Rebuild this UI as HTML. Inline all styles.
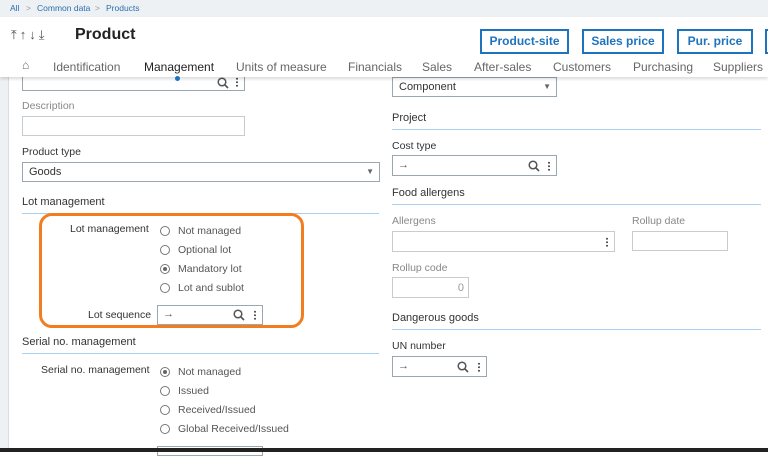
<!DOCTYPE html>
<html><head><style>
*{box-sizing:border-box;margin:0;padding:0}
body{width:768px;height:452px;overflow:hidden;background:#fff;font-family:"Liberation Sans",sans-serif;color:#333;position:relative;font-size:11px}
.a{position:absolute;white-space:nowrap}
.bc{left:0;top:0;width:768px;height:17px;background:#eef1f3;font-size:8.5px;color:#2a6fb0}
.hdr{left:0;top:17px;width:768px;height:60px;background:#fff;box-shadow:0 2px 3px rgba(0,0,0,.15);z-index:2}
.btn{top:29px;height:25px;border:2px solid #1e73be;color:#1e73be;font-weight:bold;font-size:12px;text-align:center;line-height:21px;background:#fff;z-index:3}
.tab{top:60px;font-size:12px;color:#666;z-index:3}
.box{border:1px solid #9aa6b0;background:#fff}
.lbl{font-size:10.5px;color:#333}
.gl{color:#888}
.sec{font-size:11px;color:#333}
.ln{height:1px;background:#a9d0f0}
.r{width:10px;height:10px;border:1px solid #777;border-radius:50%}
.r.on::after{content:"";position:absolute;left:2px;top:2px;width:4px;height:4px;border-radius:50%;background:#666}
.ic{font-size:11px;color:#555}
.mg{position:absolute;width:12px;height:12px}
.dt{position:absolute;width:2px;height:10px;background:radial-gradient(circle,#555 0.9px,transparent 1.1px) 0 0/2px 3.5px}
</style></head><body>
<svg width="0" height="0" style="position:absolute"><defs><symbol id="m" viewBox="0 0 12 12"><circle cx="5" cy="5" r="3.8" fill="none" stroke="#555" stroke-width="1.5"/><line x1="7.8" y1="7.8" x2="11" y2="11" stroke="#555" stroke-width="1.7"/></symbol></defs></svg>
<div class="a" style="left:0;top:17px;width:9px;height:435px;background:#eef1f3;border-right:1px solid #d8dde2"></div>
<div class="a bc"><span class="a" style="left:10px;top:3px">All</span><span class="a" style="left:26px;top:3px;color:#999">&gt;</span><span class="a" style="left:37px;top:3px">Common data</span><span class="a" style="left:95px;top:3px;color:#999">&gt;</span><span class="a" style="left:106px;top:3px">Products</span></div>
<div class="a hdr"></div>
<div class="a" style="left:11px;top:27px;font-size:13px;color:#555;z-index:3;letter-spacing:3px">⤒↑↓⤓</div>
<div class="a" style="left:75px;top:26px;font-size:16px;font-weight:bold;color:#222;z-index:3">Product</div>
<div class="a btn" style="left:480px;width:89px">Product-site</div>
<div class="a btn" style="left:582px;width:82px">Sales price</div>
<div class="a btn" style="left:677px;width:76px">Pur. price</div>
<div class="a btn" style="left:765px;width:10px"></div>
<div class="a tab" style="left:22px;top:58px;font-size:12px">⌂</div>
<div class="a tab" style="left:53px">Identification</div>
<div class="a tab" style="left:144px;color:#222">Management</div>
<div class="a" style="left:175px;top:76px;width:5px;height:5px;border-radius:50%;background:#1e73be;z-index:4"></div>
<div class="a tab" style="left:236px">Units of measure</div>
<div class="a tab" style="left:348px">Financials</div>
<div class="a tab" style="left:422px">Sales</div>
<div class="a tab" style="left:474px">After-sales</div>
<div class="a tab" style="left:553px">Customers</div>
<div class="a tab" style="left:633px">Purchasing</div>
<div class="a tab" style="left:713px">Suppliers</div>

<div class="a box" style="left:22px;top:72px;width:223px;height:19px"><svg class="mg" style="left:194px;top:4px"><use href="#m"/></svg><span class="dt" style="left:213px;top:4px"></span></div>
<div class="a lbl gl" style="left:22px;top:100px">Description</div>
<div class="a box" style="left:22px;top:116px;width:223px;height:20px;border-color:#c5ccd2"></div>
<div class="a lbl" style="left:22px;top:146px">Product type</div>
<div class="a box" style="left:22px;top:162px;width:358px;height:20px"><span class="a" style="left:6px;top:3px;font-size:11px">Goods</span><span class="a" style="right:5px;top:4px;font-size:8px;color:#666">▼</span></div>
<div class="a sec" style="left:22px;top:196px">Lot management</div>
<div class="a ln" style="left:22px;top:213px;width:357px"></div>
<div class="a" style="left:39px;top:213px;width:265px;height:115px;border:3px solid #f47c20;border-radius:13px"></div>
<div class="a lbl" style="left:70px;top:223px">Lot management</div>
<div class="a r" style="left:160px;top:226px"></div><div class="a lbl" style="left:178px;top:225px;color:#555">Not managed</div>
<div class="a r" style="left:160px;top:245px"></div><div class="a lbl" style="left:178px;top:244px;color:#555">Optional lot</div>
<div class="a r on" style="left:160px;top:264px"></div><div class="a lbl" style="left:178px;top:263px;color:#555">Mandatory lot</div>
<div class="a r" style="left:160px;top:283px"></div><div class="a lbl" style="left:178px;top:282px;color:#555">Lot and sublot</div>
<div class="a lbl" style="left:88px;top:309px">Lot sequence</div>
<div class="a box" style="left:157px;top:305px;width:106px;height:20px"><span class="a ic" style="left:5px;top:2px">→</span><svg class="mg" style="left:75px;top:3px"><use href="#m"/></svg><span class="dt" style="left:96px;top:4px"></span></div>
<div class="a sec" style="left:22px;top:336px">Serial no. management</div>
<div class="a ln" style="left:22px;top:353px;width:357px"></div>
<div class="a lbl" style="left:41px;top:364px">Serial no. management</div>
<div class="a r on" style="left:160px;top:367px"></div><div class="a lbl" style="left:178px;top:366px;color:#555">Not managed</div>
<div class="a r" style="left:160px;top:386px"></div><div class="a lbl" style="left:178px;top:385px;color:#555">Issued</div>
<div class="a r" style="left:160px;top:405px"></div><div class="a lbl" style="left:178px;top:404px;color:#555">Received/Issued</div>
<div class="a r" style="left:160px;top:424px"></div><div class="a lbl" style="left:178px;top:423px;color:#555">Global Received/Issued</div>
<div class="a box" style="left:157px;top:446px;width:106px;height:10px"></div>

<div class="a box" style="left:392px;top:77px;width:165px;height:20px"><span class="a" style="left:6px;top:3px;font-size:11px">Component</span><span class="a" style="right:5px;top:4px;font-size:8px;color:#666">▼</span></div>
<div class="a sec" style="left:392px;top:112px">Project</div>
<div class="a ln" style="left:392px;top:129px;width:369px"></div>
<div class="a lbl" style="left:392px;top:140px">Cost type</div>
<div class="a box" style="left:392px;top:155px;width:165px;height:21px"><span class="a ic" style="left:5px;top:3px">→</span><svg class="mg" style="left:135px;top:4px"><use href="#m"/></svg><span class="dt" style="left:155px;top:5px"></span></div>
<div class="a sec" style="left:392px;top:187px">Food allergens</div>
<div class="a ln" style="left:392px;top:204px;width:369px"></div>
<div class="a lbl gl" style="left:392px;top:215px">Allergens</div>
<div class="a box" style="left:392px;top:231px;width:223px;height:21px;border-color:#c5ccd2"><span class="dt" style="left:213px;top:5px"></span></div>
<div class="a lbl gl" style="left:632px;top:215px">Rollup date</div>
<div class="a box" style="left:632px;top:231px;width:96px;height:20px;border-color:#c5ccd2"></div>
<div class="a lbl gl" style="left:392px;top:262px">Rollup code</div>
<div class="a box" style="left:392px;top:277px;width:77px;height:21px;border-color:#c5ccd2"><span class="a" style="right:4px;top:4px;color:#999;font-size:11px">0</span></div>
<div class="a sec" style="left:392px;top:312px">Dangerous goods</div>
<div class="a ln" style="left:392px;top:329px;width:369px"></div>
<div class="a lbl" style="left:392px;top:340px">UN number</div>
<div class="a box" style="left:392px;top:356px;width:95px;height:21px"><span class="a ic" style="left:5px;top:3px">→</span><svg class="mg" style="left:64px;top:4px"><use href="#m"/></svg><span class="dt" style="left:85px;top:5px"></span></div>
<div class="a" style="left:0;top:448px;width:768px;height:4px;background:#222;z-index:5"></div>
</body></html>
